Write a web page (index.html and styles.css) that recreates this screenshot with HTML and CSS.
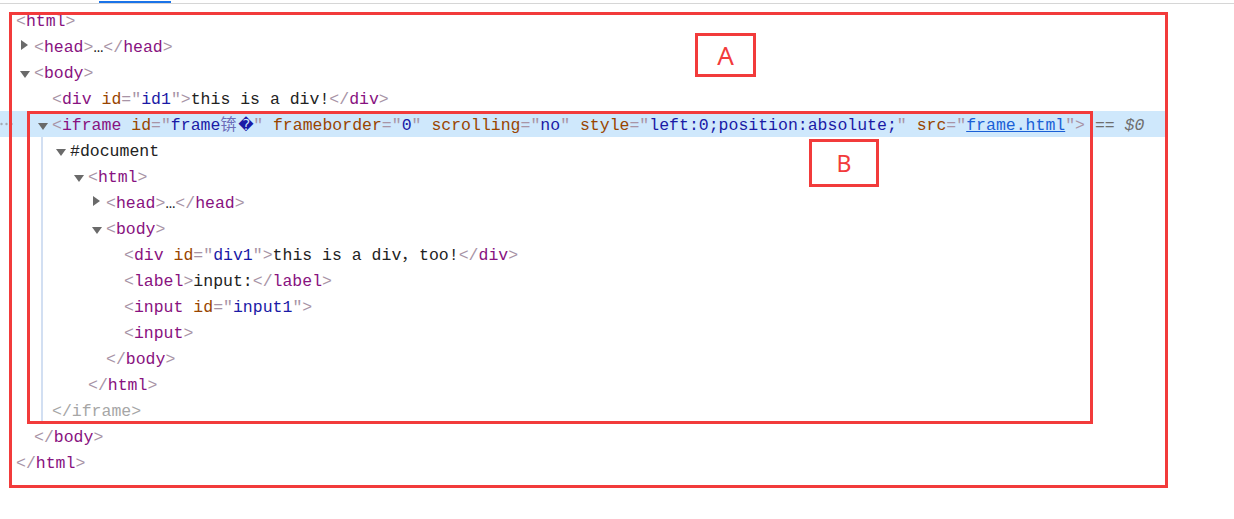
FILE: index.html
```html
<!DOCTYPE html>
<html lang="en">

<head>
    <meta charset="UTF-8">
    <title>Elements</title>
    <link rel="stylesheet" href="styles.css">
</head>

<body>
    <div class="page">
        <div class="topbar">
            <div class="tab-active"></div>
        </div>

        <div class="tree">
            <div class="row d0"><span class="br">&lt;</span><span class="tag">html</span><span class="br">&gt;</span></div>
            <div class="row d1"><span class="toggle closed"><svg width="7" height="10" viewBox="0 0 7 10"><path d="M0 0L7 5L0 10Z"/></svg></span><span class="br">&lt;</span><span class="tag">head</span><span class="br">&gt;</span>…<span class="br">&lt;/</span><span class="tag">head</span><span class="br">&gt;</span></div>
            <div class="row d1"><span class="toggle"><svg width="10" height="7" viewBox="0 0 10 7"><path d="M0 0H10L5 7Z"/></svg></span><span class="br">&lt;</span><span class="tag">body</span><span class="br">&gt;</span></div>
            <div class="row d2"><span class="br">&lt;</span><span class="tag">div</span> <span class="attr">id</span><span class="br">="</span><span class="val">id1</span><span class="br">"&gt;</span>this is a div!<span class="br">&lt;/</span><span class="tag">div</span><span class="br">&gt;</span></div>
            <!-- 选中的行 -->
            <div class="row d2 selected"><span class="dots"><svg width="14" height="4" viewBox="0 0 14 4"><circle cx="1.5" cy="2" r="1.2"/><circle cx="6.5" cy="2" r="1.2"/><circle cx="11.5" cy="2" r="1.2"/></svg></span><span class="toggle"><svg width="10" height="7" viewBox="0 0 10 7"><path d="M0 0H10L5 7Z"/></svg></span><span class="br">&lt;</span><span class="tag">iframe</span> <span class="attr">id</span><span class="br">="</span><span class="val">frame<span class="wide cjk">锛</span><span class="repl">�</span></span><span class="br">"</span> <span class="attr">frameborder</span><span class="br">="</span><span class="val">0</span><span class="br">"</span> <span class="attr">scrolling</span><span class="br">="</span><span class="val">no</span><span class="br">"</span> <span class="attr">style</span><span class="br">="</span><span class="val">left:0;position:absolute;</span><span class="br">"</span> <span class="attr">src</span><span class="br">="</span><span class="link">frame.html</span><span class="br">"&gt;</span><span class="ref"> == $0</span></div>

            <div class="subtree">
                <div class="row d3"><span class="toggle"><svg width="10" height="7" viewBox="0 0 10 7"><path d="M0 0H10L5 7Z"/></svg></span>#document</div>
                <div class="row d4"><span class="toggle"><svg width="10" height="7" viewBox="0 0 10 7"><path d="M0 0H10L5 7Z"/></svg></span><span class="br">&lt;</span><span class="tag">html</span><span class="br">&gt;</span></div>
                <div class="row d5"><span class="toggle closed"><svg width="7" height="10" viewBox="0 0 7 10"><path d="M0 0L7 5L0 10Z"/></svg></span><span class="br">&lt;</span><span class="tag">head</span><span class="br">&gt;</span>…<span class="br">&lt;/</span><span class="tag">head</span><span class="br">&gt;</span></div>
                <div class="row d5"><span class="toggle"><svg width="10" height="7" viewBox="0 0 10 7"><path d="M0 0H10L5 7Z"/></svg></span><span class="br">&lt;</span><span class="tag">body</span><span class="br">&gt;</span></div>
                <div class="row d6"><span class="br">&lt;</span><span class="tag">div</span> <span class="attr">id</span><span class="br">="</span><span class="val">div1</span><span class="br">"&gt;</span>this is a div<span class="wide cjk">，</span>too!<span class="br">&lt;/</span><span class="tag">div</span><span class="br">&gt;</span></div>
                <div class="row d6"><span class="br">&lt;</span><span class="tag">label</span><span class="br">&gt;</span>input:<span class="br">&lt;/</span><span class="tag">label</span><span class="br">&gt;</span></div>
                <div class="row d6"><span class="br">&lt;</span><span class="tag">input</span> <span class="attr">id</span><span class="br">="</span><span class="val">input1</span><span class="br">"&gt;</span></div>
                <div class="row d6"><span class="br">&lt;</span><span class="tag">input</span><span class="br">&gt;</span></div>
                <div class="row d5"><span class="br">&lt;/</span><span class="tag">body</span><span class="br">&gt;</span></div>
                <div class="row d4"><span class="br">&lt;/</span><span class="tag">html</span><span class="br">&gt;</span></div>
                <div class="row d2 faded">&lt;/iframe&gt;</div>
            </div>

            <div class="row d1"><span class="br">&lt;/</span><span class="tag">body</span><span class="br">&gt;</span></div>
            <div class="row d0"><span class="br">&lt;/</span><span class="tag">html</span><span class="br">&gt;</span></div>
        </div>

        <!-- 标注框 -->
        <div class="mark mark-a"></div>
        <div class="mark mark-b"></div>
        <div class="label label-a">A</div>
        <div class="label label-b">B</div>
    </div>
</body>

</html>
```

FILE: styles.css
```css
* {
    padding: 0;
    margin: 0;
    box-sizing: border-box;
}

body {
    background-color: #fff;
    font-family: "Liberation Mono", monospace;
    font-size: 16.5px;
    color: #222;
}

.page {
    position: relative;
    width: 1234px;
    height: 519px;
    overflow: hidden;
}

.topbar {
    height: 4px;
    border-bottom: 1px solid #d6d6d6;
    padding-left: 99px;
    padding-top: 1px;
}

.tab-active {
    width: 72px;
    height: 2px;
    background-color: #1a73e8;
}

.tree {
    width: 1166px;
    padding-top: 3px;
}

.row {
    height: 26px;
    padding-top: 4px;
    line-height: 22px;
    white-space: pre;
    position: relative;
}

/* 缩进 */
.d0 {
    padding-left: 16px;
}

.d1 {
    padding-left: 34px;
}

.d2 {
    padding-left: 52px;
}

.subtree {
    margin-left: 41px;
    border-left: 2px solid #d2dff2;
}

.subtree .d2 {
    padding-left: 9px;
}

.subtree .d3 {
    padding-left: 27px;
}

.subtree .d4 {
    padding-left: 45px;
}

.subtree .d5 {
    padding-left: 63px;
}

.subtree .d6 {
    padding-left: 81px;
}

.toggle {
    display: inline-flex;
    align-items: center;
    width: 14px;
    height: 22px;
    margin-left: -14px;
    vertical-align: top;
}

.toggle svg {
    fill: #6a6a6a;
}

.toggle.closed svg {
    margin-left: 1px;
    margin-top: -7px;
}

.selected {
    background-color: #cfe8fc;
}

.dots {
    position: absolute;
    left: 0;
    top: 11px;
    line-height: 0;
}

.dots svg {
    fill: #a4abb3;
}

.br {
    color: #a894a6;
}

.tag {
    color: #881280;
}

.attr {
    color: #994500;
}

.val {
    color: #1a1aa6;
}

.link {
    color: #1a5fd6;
    text-decoration: underline;
}

.wide {
    display: inline-block;
    width: 2ch;
}

.cjk {
    font-family: "Noto Sans CJK SC", sans-serif;
    font-size: 16px;
    line-height: 1;
}

.val .cjk {
    color: #6c6cb8;
}

.repl {
    display: inline-block;
    width: 15px;
    font-family: "DejaVu Sans", sans-serif;
    font-size: 15px;
    line-height: 1;
    color: #1a1aa6;
}

.ref {
    color: #6e6e6e;
    font-style: italic;
}

.faded {
    color: #a6a6a6;
}

/* 红色标注 */
.mark {
    position: absolute;
    border: 3px solid #f23b3b;
}

.mark-a {
    left: 9px;
    top: 12px;
    width: 1159px;
    height: 476px;
}

.mark-b {
    left: 27px;
    top: 111px;
    width: 1066px;
    height: 313px;
}

.label {
    position: absolute;
    border: 3px solid #f23b3b;
    color: #f23b3b;
    font-family: "Noto Sans", sans-serif;
    display: flex;
    align-items: center;
    justify-content: center;
}

.label-a {
    left: 695px;
    top: 33px;
    width: 61px;
    height: 44px;
    font-size: 26px;
}

.label-b {
    left: 809px;
    top: 139px;
    width: 70px;
    height: 48px;
    font-size: 23px;
}
```
